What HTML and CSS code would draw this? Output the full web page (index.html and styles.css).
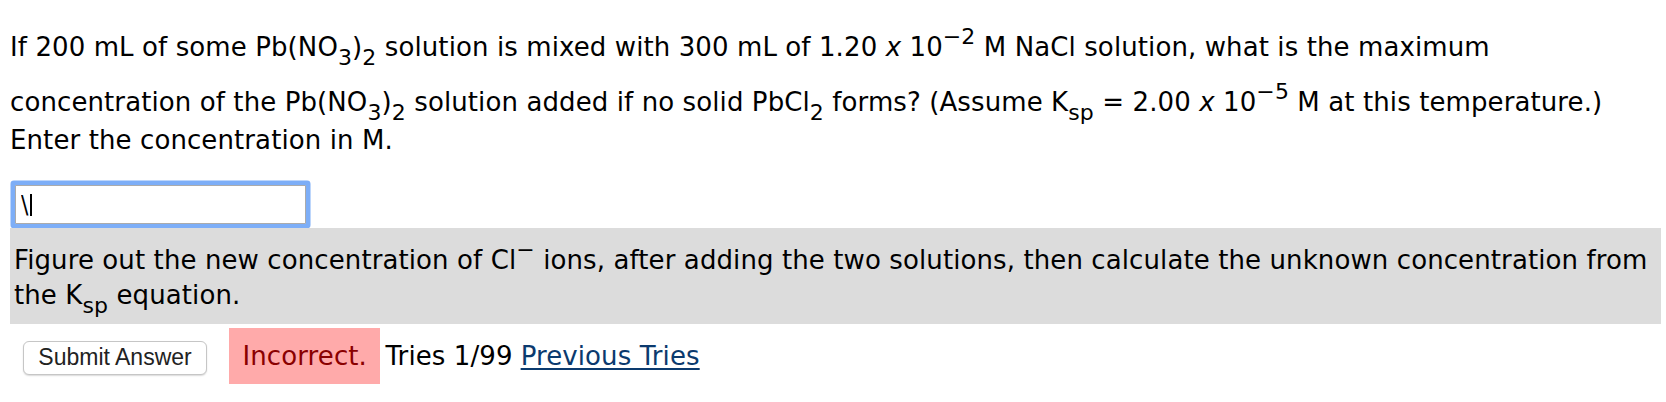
FILE: index.html
```html
<!DOCTYPE html>
<html lang="en">
<head>
<meta charset="utf-8">
<title>Problem</title>
<link rel="stylesheet" href="styles.css">
</head>
<body>
<div class="page">
  <div class="question">
    <div class="q-line">If 200 mL of some Pb(NO<sub>3</sub>)<sub>2</sub> solution is mixed with 300 mL of 1.20 <i>x</i> 10<sup>−2</sup> M NaCl solution, what is the maximum</div>
    <div class="q-line">concentration of the Pb(NO<sub>3</sub>)<sub>2</sub> solution added if no solid PbCl<sub>2</sub> forms? (Assume K<sub>sp</sub> = 2.00 <i>x</i> 10<sup>−5</sup> M at this temperature.)</div>
    <div class="q-line">Enter the concentration in M.</div>
  </div>
  <div class="answer-wrap">
    <div class="answer-input"><span class="typed">\</span><span class="caret"></span></div>
  </div>
  <div class="hint">
    <div class="h-line">Figure out the new concentration of Cl<sup>−</sup> ions, after adding the two solutions, then calculate the unknown concentration from</div>
    <div class="h-line">the K<sub>sp</sub> equation.</div>
  </div>
  <div class="result-row">
    <button class="submit-btn" type="button">Submit Answer</button>
    <span class="incorrect">Incorrect.</span>
    <span class="tries">Tries 1/99</span>
    <a class="prev-tries" href="#">Previous Tries</a>
  </div>
</div>
</body>
</html>
```

FILE: styles.css
```css
html, body {
  margin: 0;
  padding: 0;
  background: #ffffff;
}

.page {
  width: 1651px;
  padding: 0 0 0 10px;
  font-family: "DejaVu Sans", Verdana, sans-serif;
  font-size: 26px;
  letter-spacing: 0.1px;
  color: #000000;
}

.question {
  padding-top: 13px;
  line-height: 35px;
}

.q-line,
.h-line {
  white-space: nowrap;
}

sub, sup {
  font-size: 22px;
}

sub {
  vertical-align: -9px;
  line-height: 21px;
}

sup {
  vertical-align: 12px;
  line-height: 44px;
}

.question sup {
  line-height: 48px;
}

i {
  font-style: italic;
}

.answer-wrap {
  padding: 27px 0 4px 5px;
}

.answer-input {
  box-sizing: border-box;
  width: 291px;
  height: 39px;
  border: 1px solid #ababab;
  box-shadow: 0 0 0 4.5px #7daef7;
  border-radius: 1px;
  background: #ffffff;
  display: flex;
  align-items: center;
  padding-left: 5px;
  font-size: 22px;
  line-height: 1;
}

.typed {
  display: inline-block;
  transform: scaleY(1.15);
}

.caret {
  display: inline-block;
  width: 2px;
  height: 22px;
  margin-left: 1px;
  background: #000000;
}

.hint {
  background: #dcdcdc;
  padding: 0 4px 8px 4px;
  line-height: 35px;
}

.result-row {
  display: flex;
  align-items: baseline;
  margin-top: 4px;
  line-height: 30px;
}

.submit-btn {
  margin-left: 13px;
  box-sizing: border-box;
  width: 184px;
  height: 34px;
  padding: 0;
  border: 1px solid #c6c6c6;
  border-radius: 6px;
  background: #ffffff;
  box-shadow: 0 1px 1.5px rgba(0, 0, 0, 0.15);
  font-family: "Liberation Sans", Arial, sans-serif;
  font-size: 23px;
  color: #222222;
}

.incorrect {
  margin-left: 22px;
  padding: 13px 13.5px;
  background: #ffaaaa;
  color: #8a0000;
}

.tries {
  margin-left: 5px;
}

.prev-tries {
  margin-left: 8px;
  color: #0b3a6e;
  text-decoration: underline;
  text-decoration-thickness: 2px;
  text-underline-offset: 3px;
}
```
